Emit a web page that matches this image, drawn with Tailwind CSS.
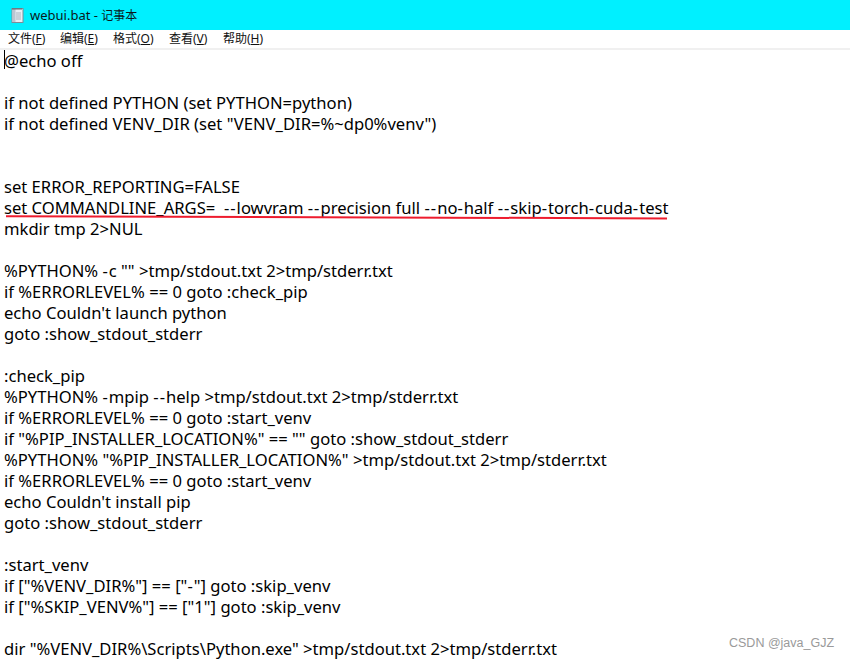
<!DOCTYPE html>
<html lang="zh"><head><meta charset="utf-8"><script src="https://cdn.jsdelivr.net/npm/@tailwindcss/browser@4"></script></head>
<body class="m-0 bg-white">
<div class="relative w-[850px] h-[660px] overflow-hidden bg-white font-['Noto_Sans','Noto_Sans_CJK_SC',sans-serif] text-black">
  <header class="h-[30px] bg-[#00f0ff] flex items-center pl-[10px] gap-[5px]">
    <svg width="15" height="16" viewBox="0 0 15 16" class="shrink-0">
      <rect x="2" y="1.5" width="11" height="14" fill="#e8eef4" stroke="#7f8c99"/>
      <rect x="2.5" y="2" width="3" height="13" fill="#b9c6d2"/>
      <path d="M3 1v2M5 1v2M7 1v2M9 1v2M11 1v2" stroke="#5c6670"/>
      <path d="M6 6h5M6 8h5M6 10h5M6 12h5" stroke="#a9b4bf"/>
    </svg>
    <span class="text-[13px] leading-none text-[#0a1a1c]">webui.bat - <span class="text-[12px]">记事本</span></span>
  </header>
  <nav class="h-[18px] flex items-center text-[12px] leading-[18px] text-[#111] pl-[8px] gap-[15px] box-content">
    <span class="w-[37px] whitespace-nowrap">文件(<u>F</u>)</span>
    <span class="w-[38px] whitespace-nowrap">编辑(<u>E</u>)</span>
    <span class="w-[41px] whitespace-nowrap">格式(<u>O</u>)</span>
    <span class="w-[39px] whitespace-nowrap">查看(<u>V</u>)</span>
    <span class="w-[41px] whitespace-nowrap">帮助(<u>H</u>)</span>
  </nav>
  <div class="h-[2px] bg-[#f0f0f0]"></div>
  <pre class="relative pl-[4px] text-[16.6px] leading-[21px] whitespace-pre font-['Noto_Sans','Noto_Sans_CJK_SC',sans-serif] text-black">@echo off

if not defined PYTHON (set PYTHON=python)
if not defined VENV_DIR (set "VENV_DIR=%~dp0%venv")


set ERROR_REPORTING=FALSE
set COMMANDLINE_ARGS=  <span class="inline-block tracking-[1px]">--</span>lowvram <span class="inline-block tracking-[1px]">--</span>precision full <span class="inline-block tracking-[1px]">--</span>no<span class="inline-block tracking-[1px]">-</span>half <span class="inline-block tracking-[1px]">--</span>skip<span class="inline-block tracking-[1px]">-</span>torch<span class="inline-block tracking-[1px]">-</span>cuda<span class="inline-block tracking-[1px]">-</span>test
mkdir tmp 2&gt;NUL

%PYTHON% <span class="inline-block tracking-[1px]">-</span>c "" &gt;tmp/stdout.txt 2&gt;tmp/stderr.txt
if %ERRORLEVEL% == 0 goto :check_pip
echo Couldn't launch python
goto :show_stdout_stderr

:check_pip
%PYTHON% <span class="inline-block tracking-[1px]">-</span>mpip <span class="inline-block tracking-[1px]">--</span>help &gt;tmp/stdout.txt 2&gt;tmp/stderr.txt
if %ERRORLEVEL% == 0 goto :start_venv
if "%PIP_INSTALLER_LOCATION%" == "" goto :show_stdout_stderr
%PYTHON% "%PIP_INSTALLER_LOCATION%" &gt;tmp/stdout.txt 2&gt;tmp/stderr.txt
if %ERRORLEVEL% == 0 goto :start_venv
echo Couldn't install pip
goto :show_stdout_stderr

:start_venv
if ["%VENV_DIR%"] == ["<span class="inline-block tracking-[1px]">-</span>"] goto :skip_venv
if ["%SKIP_VENV%"] == ["1"] goto :skip_venv

dir "%VENV_DIR%\Scripts\Python.exe" &gt;tmp/stdout.txt 2&gt;tmp/stderr.txt</pre>
  <div class="absolute left-[4px] top-[50px] w-px h-[19px] bg-black"></div>
  <svg class="absolute left-0 top-0" width="850" height="660" viewBox="0 0 850 660"><path d="M6 216.2 L667 218.4" stroke="#ee1c2e" stroke-width="2" fill="none"/></svg>
  <div class="absolute left-[729px] top-[634px] text-[12.5px] leading-[18px] text-[#9a9a9a] font-['Liberation_Sans',sans-serif]">CSDN @java_GJZ</div>
</div>
</body></html>
